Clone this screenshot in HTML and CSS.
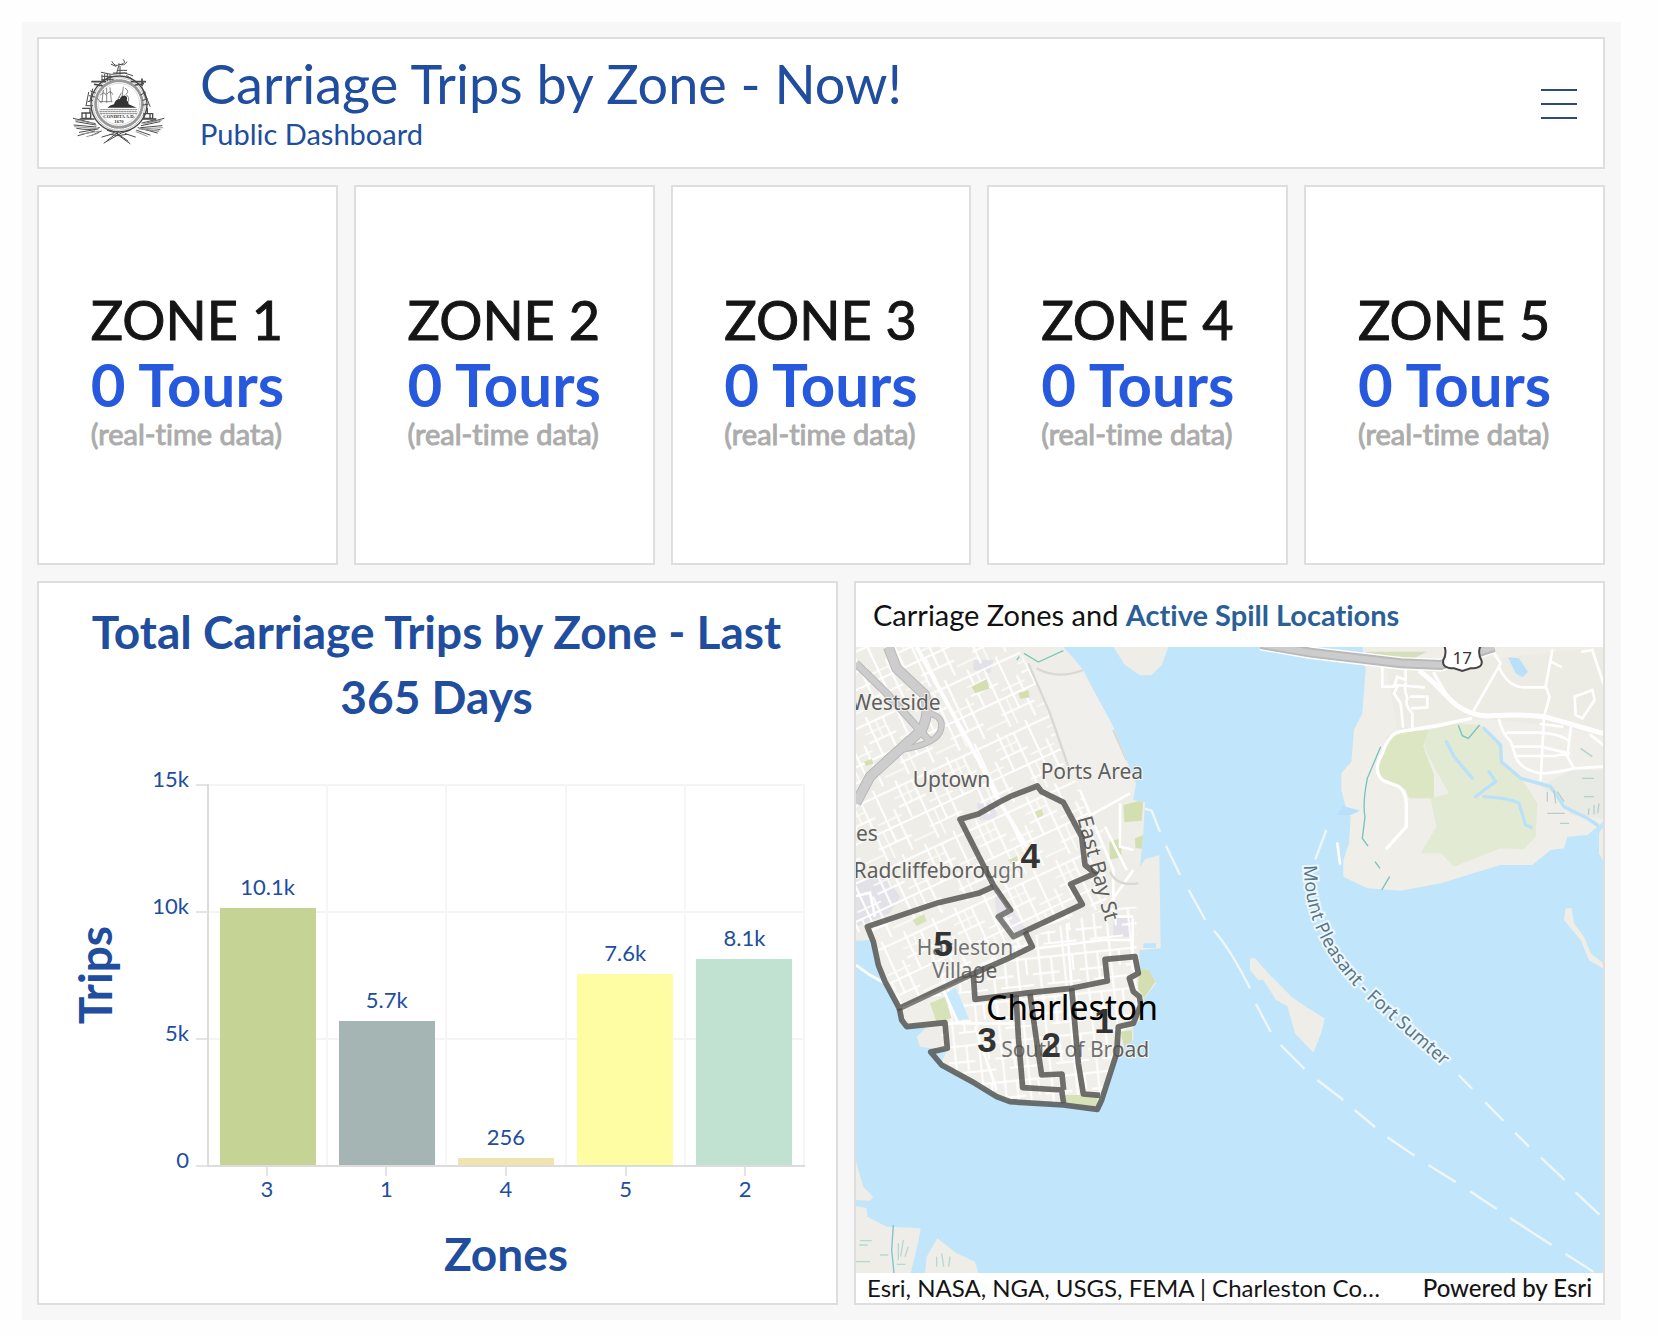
FILE: index.html
```html
<!DOCTYPE html>
<html lang="en">
<head>
<meta charset="utf-8">
<meta name="viewport" content="width=device-width, initial-scale=1">
<title>Carriage Trips by Zone</title>
<link rel="stylesheet" href="styles.css">
</head>
<body>
<div class="dashboard">
  <header class="panel header">
    <svg class="seal" viewBox="0 0 360 330" role="img" aria-label="City seal">
      <g fill="none" stroke="#4a4a4a" stroke-linecap="round">
        <circle cx="177" cy="165" r="84" stroke-width="4"/>
        <circle cx="177" cy="165" r="79" stroke-width="1"/>
        <circle cx="177" cy="165" r="70" stroke-width="9" stroke-dasharray="3 5" stroke="#999"/>
        <circle cx="177" cy="165" r="62" stroke-width="1" stroke="#999"/>
        <path stroke-width="3" d="M156 38q10 18 22 8q-6 16-8 28M176 45q18 8 24-6M190 32q10 10-6 14M154 46l14 6M180 52v24M172 64h28"/>
        <path stroke-width="3" d="M124 70l30 6 40-4 24 8M126 78v20M134 76v22M142 76v20M150 78v16M126 82h30M126 92h34M200 80l16 10M160 72h40"/>
        <path stroke-width="5" d="M96 98h40M214 98h42M104 106l22 4M226 108l24-4M246 90v20"/>
        <path stroke-width="3" d="M98 120l-8 36M92 126l14 6M88 140l16 4M84 158l14-4M80 170h18M246 116l12 34M256 130l-14 8M262 150l-14 4M264 166l-16 2M86 130l-8 40M252 128l18 44"/>
        <path stroke-width="4" d="M66 192h26v16H66zM78 192v16M60 210h42M68 178h22v14M252 194h26v14h-26zM262 178v16M248 210h40M270 194v14"/>
        <path stroke-width="3" d="M40 208l50 12M48 218l60 10M42 228l66 6M50 238q40 8 68-2M58 250l56-10M54 260l50-14M94 260l30-14M70 216l36 8M312 208l-50 14M300 218l-56 12M306 230l-64 6M300 242q-40 6-66-6M292 252l-50-14M270 258l-40-14M286 212l-40 10"/>
        <path stroke-width="3" stroke="#999" d="M46 213l56 10M44 233l70 6M66 255l50-8M306 213l-56 12M308 236l-70 4M296 247l-56-8M80 263l34-10M262 262l-34-14"/>
        <path stroke-width="3" d="M132 282l52-30 26-8M140 276l36-28M210 284l-44-32-24-8M204 276l-34-24M126 264l34-10M226 264l-30-10M150 256l24 4 26-4"/>
        <path stroke-width="2" d="M130 124l-4 34M140 118v42M150 116l4 40M122 138q10-14 16 0M142 134q10-14 16 2M120 158h36M112 148l12 14M190 114l-4 30M196 118q14 8 2 18q12 8 8 20M184 132l-10 18M178 144l10 10"/>
        <path stroke-width="2" stroke-dasharray="5 3" d="M120 188h112M122 182h108M122 194h108"/>
      </g>
      <path fill="#333" d="M142 176q8-8 20-10q4-16 18-16q4-12 16-10q8 4 4 14q8 6 6 12l24 10z"/>
      <text class="seal-text" x="177" y="208">CONDITA A.D.</text>
      <text class="seal-text" x="177" y="222">1670</text>
    </svg>
    <div class="heading">
      <h1 class="title">Carriage Trips by Zone - Now!</h1>
      <p class="subtitle">Public Dashboard</p>
    </div>
    <button class="menu" type="button" aria-label="Menu"><span></span><span></span><span></span></button>
  </header>

  <section class="zones" aria-label="Zones">
    <article class="panel zone"><div><h2 class="zone-name">ZONE 1</h2><p class="zone-count">0 Tours</p><p class="zone-note">(real-time data)</p></div></article>
    <article class="panel zone"><div><h2 class="zone-name">ZONE 2</h2><p class="zone-count">0 Tours</p><p class="zone-note">(real-time data)</p></div></article>
    <article class="panel zone"><div><h2 class="zone-name">ZONE 3</h2><p class="zone-count">0 Tours</p><p class="zone-note">(real-time data)</p></div></article>
    <article class="panel zone"><div><h2 class="zone-name">ZONE 4</h2><p class="zone-count">0 Tours</p><p class="zone-note">(real-time data)</p></div></article>
    <article class="panel zone"><div><h2 class="zone-name">ZONE 5</h2><p class="zone-count">0 Tours</p><p class="zone-note">(real-time data)</p></div></article>
  </section>

  <div class="details">
    <section class="panel chart-panel">
      <h2 class="chart-title">Total Carriage Trips by Zone - Last 365 Days</h2>
      <div class="chart">
        <div class="y-title">Trips</div>
        <div class="y-axis"><span>15k</span><span>10k</span><span>5k</span><span>0</span></div>
        <div class="plot">
          <div class="slot"><span class="value">10.1k</span><div class="bar olive" style="height:67.5%"></div></div>
          <div class="slot"><span class="value">5.7k</span><div class="bar slate" style="height:37.8%"></div></div>
          <div class="slot"><span class="value">256</span><div class="bar sand" style="height:1.8%"></div></div>
          <div class="slot"><span class="value">7.6k</span><div class="bar yellow" style="height:50.2%"></div></div>
          <div class="slot"><span class="value">8.1k</span><div class="bar mint" style="height:54%"></div></div>
        </div>
        <div class="x-axis"><span>3</span><span>1</span><span>4</span><span>5</span><span>2</span></div>
        <div class="x-title">Zones</div>
      </div>
    </section>

    <section class="panel map-panel">
      <h2 class="map-title">Carriage Zones and <strong>Active Spill Locations</strong></h2>
      <div class="map">
      <svg class="map-art" viewBox="18 231 2241 1878" preserveAspectRatio="xMidYMid slice" role="img" aria-label="Map of Charleston carriage zones">
        <defs>
          <pattern id="blocks" width="168" height="210" patternUnits="userSpaceOnUse" patternTransform="rotate(-25)">
            <path d="M0 20H168M0 76H90M0 124H168M60 168H168M24 0V124M70 20V210M118 0V168M152 76V210" fill="none" stroke="#fff" stroke-width="6"/>
            <path d="M0 48H70M90 100H168M0 188H70M94 124V210M46 20V76" fill="none" stroke="#fcfcf7" stroke-width="5"/>
          </pattern>
          <pattern id="blocks-south" width="140" height="120" patternUnits="userSpaceOnUse" patternTransform="rotate(-6)">
            <path d="M0 16H140M0 64H80M40 96H140M22 0V120M58 16V96M96 0V120M122 16V64" fill="none" stroke="#fff" stroke-width="6"/>
          </pattern>
          <clipPath id="peninsula"><path id="land" d="M18 231H640L668 262 700 300 735 370 790 470 830 570 858 640 850 690 885 697 880 790 870 890 885 868 928 855 932 1135 868 1140 870 1198 898 1200 918 1240 880 1290 882 1340 850 1368 850 1410 805 1440 780 1520 745 1610 640 1600 470 1590 375 1540 275 1480 290 1440 210 1430 200 1400 230 1372 160 1366 148 1315 105 1235 85 1185 70 1110 18 1112Z"/></clipPath>
          <path id="ferry-label" d="M1362 886C1364 1000 1390 1090 1460 1184S1590 1320 1660 1384L1850 1552"/>
        </defs>
        <rect x="18" y="231" width="2241" height="1878" fill="#c1e6fb"/>
        <use href="#land" fill="#eeede8"/>
        <g clip-path="url(#peninsula)">
          <path fill="#e3e1e8" d="M18 930L110 920 150 980 120 1030 18 1070ZM430 940L480 1010 530 1080 490 1100 440 1040ZM370 270l60 0 -10 40 -50 -10ZM790 1040h60v60h-60ZM380 700l60 0 0 50 -50 0Z"/>
          <path fill="url(#blocks)" d="M18 231H500L560 330 640 560 760 760 770 1010 520 1090 430 950 18 1090Z"/>
          <path fill="url(#blocks)" d="M60 1070L430 950 545 1130 150 1320Z"/>
          <path fill="url(#blocks-south)" d="M545 1100L780 1010 860 1010V1200L870 1310 800 1420 745 1610 400 1590 250 1450 290 1360 230 1270Z"/>
          <path fill="#f0efeb" d="M540 290Q600 330 690 310L740 370 790 470 850 640 855 660 715 735 660 590 600 420Z"/>
          <g fill="#d3dfb0"><path d="M365 350l45-22 8 28-42 14ZM505 370l30-10 4 22-28 4ZM820 705l60-15-5 62-52 5ZM778 815l36-10v56l-34 8ZM855 805l25-10-2 42-22-4ZM188 1050l34-18 8 22-30 14ZM240 1300l45-20 20 65-45 12ZM868 1195l28 0 20 40-34 50-18-30ZM812 1385l34-5 0 40-24 10ZM645 1575h100l-6 34-92-8ZM42 575l24-8 4 14-22 6ZM555 725l20-8 6 18-18 10ZM475 870l26-12 4 14-22 10Z"/></g>
          <path fill="#c1e6fb" d="M285 1272l32-20 40 95-34 4ZM880 1120h38v14h-38Z"/>
          <g fill="none" stroke="#fff">
            <path stroke-width="12" d="M200 231L300 415 380 560 440 680 530 830"/>
            <path stroke-width="8" d="M280 1260L325 1360M650 1060L665 1250M18 978L60 968 75 1040M772 1010L850 900M715 740L840 670M690 660L790 900 790 1000M810 700V830L850 840M765 770L830 900M375 1370L440 1560M290 1360H500M520 1140L760 1110 850 1110M848 1045V1200M850 1040H790"/>
          </g>
          <path fill="none" stroke="#d9d8d4" stroke-width="7" d="M535 280L600 430 655 590M700 300Q620 330 560 295M790 480L830 570M780 905Q800 950 865 940"/>
          <g fill="none" stroke-linejoin="round">
            <path stroke="#b8b8b8" stroke-width="24" d="M18 280L110 370 240 515"/>
            <path stroke="#b8b8b8" stroke-width="32" d="M115 231L140 295 225 375Q240 430 215 480L120 565 60 620 18 700"/>
            <path stroke="#b8b8b8" stroke-width="20" d="M235 430Q285 440 272 480Q262 520 160 538"/>
            <path stroke="#cdcdcd" stroke-width="18" d="M18 280L110 370 240 515"/>
            <path stroke="#cdcdcd" stroke-width="26" d="M115 231L140 295 225 375Q240 430 215 480L120 565 60 620 18 700"/>
            <path stroke="#cdcdcd" stroke-width="14" d="M235 430Q285 440 272 480Q262 520 160 538"/>
          </g>
          <path fill="none" stroke="#7cc8ba" stroke-width="4" d="M522 250L565 276 640 242M500 270l8-10"/>
        </g>
        <path fill="#efede7" d="M790 231H955L935 285 905 315 870 316 825 285Z"/>
        <path fill="none" stroke="#fff" stroke-width="8" d="M18 1185L60 1215 105 1240"/>

        <!-- Mount Pleasant shore -->
        <g transform="translate(1212 0)">
          <path fill="#efeee9" d="M325 231L335 300 325 430 300 480 292 575 262 610 262 660 275 710 290 740 285 820 268 870 268 920 340 955 440 962 560 940 740 885 835 885 890 840 930 835 940 800 1000 795 1048 755V231Z"/>
          <path fill="#ecebe4" d="M400 300L1048 231V490L740 450 600 450 430 480Z"/>
          <path fill="#dce6c3" d="M400 500L440 485 525 480 508 530 540 615 540 685 465 685 455 658 385 630 365 590Z"/>
          <path fill="#e3ead3" d="M525 480L610 460 680 465 740 520 740 575 800 622 850 700 845 800 810 838 740 835 600 890 560 850 500 850 547 770 530 685 585 670 545 600 510 530Z"/>
          <path fill="#d6dfbb" d="M330 245H520L480 265H400Z"/>
          <path fill="#e8eae4" d="M860 650L950 600 1048 600V745L950 735 920 680Z"/>
          <g fill="none" stroke="#b9e1f8" stroke-width="10" stroke-linecap="round" stroke-linejoin="round">
            <path d="M690 475L740 525 742 575 800 625 890 650 930 710 1000 745 1030 765M577 515L600 560 655 625M705 605L725 635 690 660 665 680M690 680Q770 685 795 700L815 765 832 772"/>
          </g>
          <path fill="#b8e0fa" d="M762 262L795 265 822 305 805 322 785 310ZM248 735L268 708 318 722 290 735Z"/>
          <g fill="none" stroke="#fff" stroke-linecap="round">
            <path stroke-width="15" d="M500 305Q540 335 580 380Q630 435 700 438Q840 430 890 445L1048 490"/>
            <path stroke-width="10" d="M540 310L580 380M650 445L560 465 440 485Q405 490 385 550Q355 600 385 630L435 650Q455 665 457 700V770L398 835"/>
            <path stroke-width="8" d="M385 290V350H420L430 320 455 330V290M430 350L420 370 440 400 447 470M455 340Q450 360 460 385Q450 405 475 430V470M470 380H520V412L475 415M425 345L510 352M660 420L740 280 720 250M735 290Q760 350 810 352H870M895 240L875 350 887 380 870 440 860 630M735 450Q745 490 770 515L785 560Q800 600 860 610Q900 610 960 595L1048 590M760 488H860Q910 490 945 512M780 530H860L945 550M790 558H900L945 550M925 470L860 462M950 475L940 560 960 595M1015 360L962 380 965 435 985 445 1022 390ZM1048 340L1015 240 985 245M890 275L920 290M1010 495L1048 525M250 820L258 880"/>
          </g>
          <g fill="none" stroke="#fff" stroke-width="38"><path d="M20 222L170 248 440 280 560 285 720 231"/></g>
          <path fill="none" stroke="#b9b9b9" stroke-width="30" d="M20 222L170 248 440 280 560 285 720 231"/>
          <path fill="none" stroke="#cccccc" stroke-width="18" d="M20 222L170 248 440 280 560 285 720 231"/>
          <path fill="none" stroke="#76c3bd" stroke-width="4" d="M380 530L340 625Q325 700 333 740L325 805 342 828M613 466L625 497 643 505 677 465M363 875L378 895M407 920L383 960"/>
          <path fill="none" stroke="#b5d0cb" stroke-width="4" d="M880 730H932M918 760H945M880 665v30M900 660l5 40M910 665l20 30M985 625h35M990 680h30M1005 715l-2 20M1020 705v28M1035 700l-4 30M980 535l35 25"/>
          <path fill="#efede6" d="M935 1015H953L960 1060 990 1100 1010 1150 1048 1180V1196L1005 1170 980 1110 930 1050Z"/>
          <path fill="#efede6" d="M1048 770L1035 790 1035 850 1048 875Z"/>
          <path fill="#fff" stroke="#444" stroke-width="6" d="M570 225Q580 250 568 270Q562 295 600 295L625 303 650 295Q690 295 682 270Q670 250 680 225Z"/>
          <text class="route" x="625" y="283">17</text>
        </g>

        <!-- Harbor islands and marsh -->
        <path fill="#efede7" d="M1200 1165L1215 1165 1255 1210 1325 1280 1370 1312 1424 1345 1415 1385 1390 1448 1335 1390 1312 1308 1278 1290 1240 1230 1225 1230 1200 1200Z"/>
        <path fill="#eeede8" d="M18 1775L40 1850 70 1880 60 1892 18 1890ZM18 1908L50 1915 52 1940 110 1970 212 1975 205 2015 182 2109H18ZM262 2005L320 2050 375 2075 385 2109H225L230 2060Z"/>
        <path fill="none" stroke="#7cc3cc" stroke-width="4" d="M130 1965L125 2040 132 2109"/>
        <path fill="none" stroke="#b5d8d2" stroke-width="4" d="M145 2020v50M160 2010l-8 50M175 2030l-10 30M90 2055h25M18 2075h42M30 2012h35M28 2025h25M260 2060v30M275 2050l6 40M300 2060l-4 30M140 2083h26"/>
        <g fill="none" stroke="#eef6f6" stroke-width="7">
          <path d="M885 716L905 722 930 786M948 827L990 915M1016 960L1066 1050M1092 1082Q1140 1135 1200 1255M1218 1302L1262 1386M1292 1425L1364 1497M1402 1530L1480 1590M1514 1620L1575 1671M1612 1702L1694 1757M1735 1785L1817 1836M1860 1864L1940 1917M1980 1944L2105 2025M2147 2052L2230 2105"/>
          <path d="M1429 780L1396 868M1826 1515L1867 1557M1906 1597L1961 1653M1995 1688L2037 1730M2073 1763L2144 1830M2177 1867L2248 1934"/>
        </g>

        <!-- Place names -->
        <g class="place">
          <text class="at-end" x="272" y="419">Westside</text>
          <text x="188" y="650">Uptown</text>
          <text x="572" y="627">Ports Area</text>
          <text x="18" y="814">es</text>
          <text class="at-end" x="522" y="923">Radcliffeborough</text>
          <text x="200" y="1154">Harleston</text>
          <text x="246" y="1224">Village</text>
          <text x="454" y="1461">South of Broad</text>
          <text transform="translate(682 745) rotate(75)">East Bay St</text>
        </g>
        <text class="ferry"><textPath href="#ferry-label">Mount Pleasant - Fort Sumter</textPath></text>

        <!-- Carriage zone boundaries -->
        <g fill="#fff" fill-opacity=".12" stroke="#50504d" stroke-opacity=".82" stroke-width="17" stroke-linejoin="round">
          <path d="M330 748L385 732 450 695 480 680 562 648 575 665 640 697 695 800 705 885 735 910 662 942 697 1003 490 1100 445 1040 482 1020 430 945Z"/>
          <path d="M430 950L385 970 265 998 52 1070 70 1115 85 1185 105 1235 148 1315 350 1220 475 1165 547 1130 525 1085"/>
          <path d="M148 1315L155 1350 170 1370 285 1358 292 1435 242 1446 275 1485 375 1540 440 1580 480 1595 640 1605 742 1618 755 1590 800 1450 805 1370 850 1360 872 1305 868 1280 850 1265 838 1225 865 1210 855 1160 765 1168 772 1233 665 1255 540 1268 375 1288 370 1215"/>
          <path fill="none" d="M498 1276L505 1400 518 1553 635 1560 641 1600M641 1560L636 1512 575 1515 560 1415 540 1272M665 1255L685 1480 700 1572 750 1576"/>
        </g>
        <text class="city" x="408" y="1349">Charleston</text>
        <g class="zone-number">
          <text x="541" y="894">4</text><text x="280" y="1158">5</text><text x="411" y="1446">3</text><text x="604" y="1462">2</text><text x="762" y="1388">1</text>
        </g>
      </svg>
      </div>
      <footer class="credits"><span class="sources">Esri, NASA, NGA, USGS, FEMA | Charleston Co…</span><span class="powered">Powered by <a href="https://www.esri.com">Esri</a></span></footer>
    </section>
  </div>
</div>
</body>
</html>
```
FILE: styles.css
```css
* { box-sizing: border-box; }

body {
  margin: 0;
  padding: 22px 37px 16px 22px;
  background: #fefefe;
  color: #151515;
  font-family: Lato, "Open Sans", sans-serif;
  font-variant-ligatures: none;
}

h1, h2, p { margin: 0; font-weight: 400; }

.dashboard {
  display: flex;
  flex-direction: column;
  gap: 16px;
  padding: 15px 16px 15px 15px;
  background: #f7f7f7;
}

.panel {
  min-width: 0;
  background: #fff;
  border: 2px solid #dedede;
}

/* Header */
.header {
  display: flex;
  align-items: center;
  gap: 20px;
  min-height: 132px;
  padding: 2px 26px 0 21px;
  color: #204d9e;
}
.seal { flex: none; width: 120px; height: 110px; }
.seal-text {
  fill: #333;
  font: 700 14px "Liberation Serif", serif;
  text-anchor: middle;
}
.heading { flex: 1; }
.title { font-size: 54px; line-height: 60px; }
.subtitle { font-size: 29px; line-height: 40px; }
.menu {
  display: flex;
  flex-direction: column;
  gap: 12px;
  padding: 0;
  border: 0;
  background: none;
  cursor: pointer;
}
.menu span { width: 36px; height: 2px; background: #2c4a7c; }

/* Zone indicators */
.zones { display: grid; grid-template-columns: repeat(5, 1fr); gap: 16px; }
.zone {
  display: flex;
  align-items: center;
  justify-content: center;
  min-height: 380px;
  padding-bottom: 10px;
}
.zone-name { font-size: 54px; line-height: 64px; -webkit-text-stroke: 1px currentColor; }
.zone-count { font-size: 60px; line-height: 64px; font-weight: 700; color: #2659dd; }
.zone-note { font-size: 29px; line-height: 36px; -webkit-text-stroke: 1px currentColor; color: #acacac; }

/* Lower row */
.details { display: grid; grid-template-columns: 801fr 751fr; gap: 16px; }

.chart-panel { padding: 16px 31px 22px 29px; color: #204d9e; }
.chart-title {
  font-size: 46px;
  line-height: 65px;
  font-weight: 700;
  text-align: center;
}
.chart {
  display: grid;
  grid-template-columns: 54px 67px 18px 1fr;
  grid-template-rows: 383px 44px auto;
  margin-top: 55px;
  font-size: 22px;
}
.y-title {
  grid-row: 1;
  align-self: center;
  justify-self: center;
  writing-mode: vertical-rl;
  transform: rotate(180deg);
  font-size: 46px;
  line-height: 54px;
  font-weight: 700;
}
.y-axis {
  grid-row: 1;
  grid-column: 2;
  display: flex;
  flex-direction: column;
  justify-content: space-between;
  margin: -18px 0 -6px;
  line-height: 26px;
  text-align: right;
}
.plot {
  grid-row: 1;
  grid-column: 4;
  display: grid;
  grid-template-columns: repeat(5, 1fr);
  border-left: 2px solid #dcdcdc;
  border-bottom: 2px solid #dcdcdc;
  background: linear-gradient(#f4f4f4 2px, transparent 2px) 0 0 / 100% 127px;
}
.slot {
  display: flex;
  flex-direction: column;
  justify-content: flex-end;
  align-items: center;
  border-right: 2px solid #f6f6f6;
}
.value { line-height: 26px; padding-bottom: 8px; }
.bar { width: 82%; flex: none; }
.olive { background: #c5d494; }
.slate { background: #a4b5b3; }
.sand { background: #f2e3ae; }
.yellow { background: #fffda4; }
.mint { background: #c1e2d1; }
.x-axis {
  grid-row: 2;
  grid-column: 4;
  display: grid;
  grid-template-columns: repeat(5, 1fr);
  text-align: center;
  line-height: 26px;
}
.x-axis span::before {
  content: "";
  display: block;
  width: 2px;
  height: 9px;
  margin: 0 auto;
  background: #e4e4e4;
}
.x-title {
  grid-row: 3;
  grid-column: 4;
  padding-top: 16px;
  font-size: 46px;
  line-height: 54px;
  font-weight: 700;
  text-align: center;
}

/* Tick marks beside the value axis */
.chart::before {
  content: "";
  grid-row: 1;
  grid-column: 3;
  margin-left: 7px;
  background: linear-gradient(#e4e4e4 2px, transparent 2px) 0 0 / 100% 127px;
}

/* Map */
.map-panel { display: flex; flex-direction: column; }
.map-title { padding: 0 17px; font-size: 29px; line-height: 64px; color: #111; }
.map-title strong { color: #2b6097; font-weight: 700; }
.map { position: relative; flex: 1; min-height: 400px; }
.map-art { position: absolute; inset: 0; width: 100%; height: 100%; }
.map-art text { font-family: "Noto Sans", sans-serif; }
.map-art .place { font-size: 63px; fill: #5f5f5f; stroke: #f4f3ee; stroke-width: 6px; paint-order: stroke; }
.map-art .at-end { text-anchor: end; }
.map-art .city { font-size: 101px; fill: #000; }
.map-art .ferry { font-size: 55px; fill: #587788; stroke: #eef7fc; stroke-width: 12px; paint-order: stroke; }
.map-art .route { font-size: 51px; fill: #333; text-anchor: middle; }
.map-art .zone-number text {
  font-family: "Liberation Sans", Arial, sans-serif;
  font-size: 105px;
  font-weight: 700;
  fill: #333;
  text-anchor: middle;
}
.credits {
  display: flex;
  justify-content: space-between;
  gap: 16px;
  padding: 0 11px;
  font-size: 24px;
  line-height: 30px;
}
.sources { min-width: 0; overflow: hidden; white-space: nowrap; text-overflow: ellipsis; }
.powered { flex: none; font-weight: 500; }
.powered a { color: inherit; text-decoration: none; }
```
